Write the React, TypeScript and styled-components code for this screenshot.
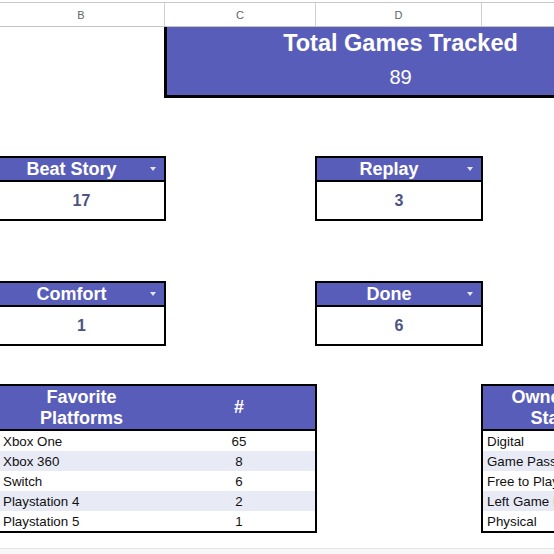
import React from "react";
import styled, { createGlobalStyle } from "styled-components";

const BLUE = "#595dba";
const STRIPE = "#e8eaf6";
const COLS = "167px 151px 166px 152px 150px";

const GlobalStyle = createGlobalStyle`
	html, body {
		margin: 0;
		padding: 0;
		background: #ffffff;
		overflow: hidden;
	}
	body {
		font-family: "Liberation Sans", Arial, sans-serif;
	}
`;

const stats = [
	{ label: "Beat Story", value: 17, col: 1, row: 3 },
	{ label: "Replay", value: 3, col: 3, row: 3 },
	{ label: "Comfort", value: 1, col: 1, row: 5 },
	{ label: "Done", value: 6, col: 3, row: 5 },
];

const platforms = [
	{ name: "Xbox One", count: 65 },
	{ name: "Xbox 360", count: 8 },
	{ name: "Switch", count: 6 },
	{ name: "Playstation 4", count: 2 },
	{ name: "Playstation 5", count: 1 },
];

const ownership = [
	{ name: "Digital", count: 52 },
	{ name: "Game Pass", count: 20 },
	{ name: "Free to Play", count: 9 },
	{ name: "Left Game Library", count: 5 },
	{ name: "Physical", count: 3 },
];

const App: React.FC = () => {
	return (
		<>
			<GlobalStyle />
			<Viewport>
				<ColumnBar>
					<ColLabel>B</ColLabel>
					<ColLabel>C</ColLabel>
					<ColLabel>D</ColLabel>
					<ColLabel />
					<ColLabel />
				</ColumnBar>

				<Sheet>
					<TotalBox>
						<TotalTitle>Total Games Tracked</TotalTitle>
						<TotalValue>89</TotalValue>
					</TotalBox>

					{stats.map((s) => (
						<StatBox key={s.label} $col={s.col} $row={s.row}>
							<StatHead>
								{s.label}
								<Arrow />
							</StatHead>
							<StatValue>{s.value}</StatValue>
						</StatBox>
					))}

					<Table $start={1} $end={3}>
						<TableHead $first='165px' $second='150px'>
							<HeadCell>
								Favorite
								<br />
								Platforms
							</HeadCell>
							<HeadCell>#</HeadCell>
						</TableHead>
						{platforms.map((p, i) => (
							<TableRow key={p.name} $first='165px' $second='150px' $striped={i % 2 === 1}>
								<NameCell>{p.name}</NameCell>
								<CountCell>{p.count}</CountCell>
							</TableRow>
						))}
					</Table>

					<Table $start={4} $end={6}>
						<TableHead $first='150px' $second='150px'>
							<HeadCell>
								Ownership
								<br />
								Status
							</HeadCell>
							<HeadCell>#</HeadCell>
						</TableHead>
						{ownership.map((o, i) => (
							<TableRow key={o.name} $first='150px' $second='150px' $striped={i % 2 === 1}>
								<NameCell>{o.name}</NameCell>
								<CountCell>{o.count}</CountCell>
							</TableRow>
						))}
					</Table>
				</Sheet>
				<Footer />
			</Viewport>
		</>
	);
};

export default App;

const Viewport = styled.div`
	width: 554px;
	height: 554px;
	overflow: hidden;
	position: relative;
	display: flex;
	flex-direction: column;
	background: #ffffff;
`;

const ColumnBar = styled.div`
	display: grid;
	grid-template-columns: ${COLS};
	margin-top: 2px;
	margin-left: -2px;
	height: 23px;
	border-top: 1px solid #c8c8c8;
	border-bottom: 1px solid #c4c4c4;
	background: #ffffff;
	flex-shrink: 0;
`;

const ColLabel = styled.div`
	display: flex;
	align-items: center;
	justify-content: center;
	border-right: 1px solid #d0d0d0;
	font-size: 11px;
	color: #5f6368;
	padding-top: 1px;
`;

const Sheet = styled.div`
	display: grid;
	grid-template-columns: ${COLS};
	grid-template-rows: 71px 58px 65px 60px 65px 38px 148px;
	margin-left: -2px;
	flex-shrink: 0;
`;

const TotalBox = styled.div`
	grid-column: 2 / 6;
	grid-row: 1;
	background: ${BLUE};
	border-left: 3px solid #000;
	border-bottom: 3px solid #000;
	margin-left: -1px;
	display: flex;
	flex-direction: column;
	align-items: center;
	padding-top: 2px;
	padding-right: 150px;
	color: #ffffff;
`;

const TotalTitle = styled.div`
	font-size: 23.5px;
	font-weight: 700;
	line-height: 28px;
`;

const TotalValue = styled.div`
	font-size: 20px;
	line-height: 24px;
	margin-top: 8px;
`;

const StatBox = styled.div<{ $col: number; $row: number }>`
	grid-column: ${(p) => p.$col};
	grid-row: ${(p) => p.$row};
	border: 2px solid #000;
	display: flex;
	flex-direction: column;
	background: #ffffff;
	margin: 0 -1px;
`;

const StatHead = styled.div`
	position: relative;
	height: 22px;
	background: ${BLUE};
	border-bottom: 2px solid #000;
	color: #ffffff;
	font-size: 18px;
	font-weight: 700;
	line-height: 23px;
	text-align: center;
	padding-right: 20px;
`;

const Arrow = styled.span`
	position: absolute;
	right: 8px;
	top: 9px;
	width: 0;
	height: 0;
	border-left: 3.5px solid transparent;
	border-right: 3.5px solid transparent;
	border-top: 4px solid #e4e5f5;
`;

const StatValue = styled.div`
	flex: 1;
	display: flex;
	align-items: center;
	justify-content: center;
	font-size: 16px;
	font-weight: 700;
	color: #4d5382;
`;

const Table = styled.div<{ $start: number; $end: number }>`
	grid-column: ${(p) => p.$start} / ${(p) => p.$end};
	grid-row: 7;
	border: 2px solid #000;
	display: flex;
	flex-direction: column;
	align-self: start;
	margin: 0 -1px;
`;

const TableHead = styled.div<{ $first: string; $second: string }>`
	display: grid;
	grid-template-columns: ${(p) => p.$first} ${(p) => p.$second};
	height: 43px;
	background: ${BLUE};
	border-bottom: 2px solid #000;
`;

const HeadCell = styled.div`
	display: flex;
	align-items: center;
	justify-content: center;
	text-align: center;
	color: #ffffff;
	font-size: 18px;
	font-weight: 700;
	line-height: 21px;
`;

const TableRow = styled.div<{ $first: string; $second: string; $striped: boolean }>`
	display: grid;
	grid-template-columns: ${(p) => p.$first} ${(p) => p.$second};
	height: 20px;
	background: ${(p) => (p.$striped ? STRIPE : "#ffffff")};
	font-size: 13.33px;
	line-height: 21px;
	color: #111111;
`;

const NameCell = styled.div`
	padding-left: 4px;
	white-space: nowrap;
	overflow: hidden;
`;

const CountCell = styled.div`
	text-align: center;
`;

const Footer = styled.div`
	margin-top: auto;
	height: 5px;
	border-top: 1px solid #e6e6e6;
	background: #f8f8f8;
`;
